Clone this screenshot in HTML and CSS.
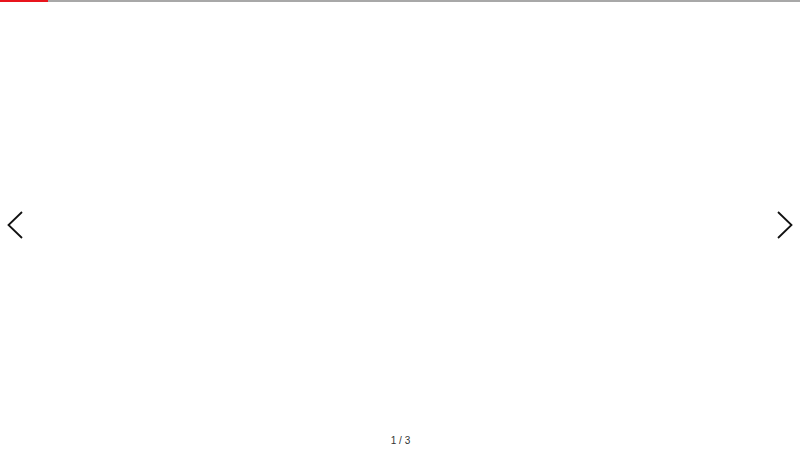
FILE: index.html
```html
<!DOCTYPE html>
<html>
<head>
<meta charset="utf-8">
<link rel="stylesheet" href="styles.css">
</head>
<body>
<div class="page">
  <div class="progress">
    <div class="progress-fill"></div>
    <div class="progress-rest"></div>
  </div>
  <div class="slider">
    <button class="nav nav-prev" aria-label="Previous">
      <svg width="16" height="28" viewBox="0 0 16 28"><path d="M15 1 L1.5 14 L15 27" fill="none" stroke="#111" stroke-width="1.8"/></svg>
    </button>
    <div class="slide"></div>
    <button class="nav nav-next" aria-label="Next">
      <svg width="16" height="28" viewBox="0 0 16 28"><path d="M1 1 L14.5 14 L1 27" fill="none" stroke="#111" stroke-width="1.8"/></svg>
    </button>
    <div class="pager">1 / 3</div>
  </div>
</div>
</body>
</html>
```
FILE: styles.css
```css
html, body {
  margin: 0;
  padding: 0;
  background: #fff;
  font-family: "Liberation Sans", Arial, sans-serif;
}
.page {
  width: 800px;
  height: 450px;
  display: flex;
  flex-direction: column;
  overflow: hidden;
}
.progress {
  height: 2px;
  display: flex;
  flex: none;
}
.progress-fill {
  width: 48px;
  background: #e8141c;
}
.progress-rest {
  flex: 1;
  background: #a8a8a8;
}
.slider {
  position: relative;
  flex: 1;
  display: flex;
  align-items: center;
  padding: 0 7px 2px 7px;
}
.slide {
  flex: 1;
}
.nav {
  border: 0;
  background: none;
  padding: 0;
  margin: 0;
  width: 16px;
  height: 28px;
  display: block;
}
.nav svg {
  display: block;
}
.pager {
  position: absolute;
  left: 0;
  right: 0;
  bottom: 3px;
  text-align: center;
  font-size: 10px;
  line-height: 12px;
  color: #333;
  padding-left: 1px;
}
```
